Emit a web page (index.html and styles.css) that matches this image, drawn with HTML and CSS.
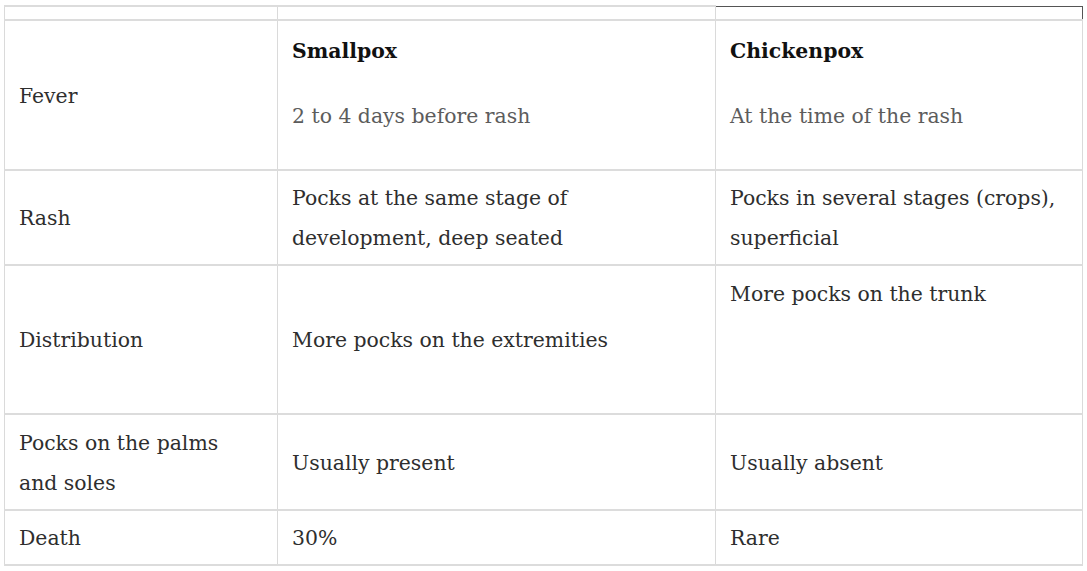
FILE: index.html
```html
<!DOCTYPE html>
<html lang="en">
<head>
<meta charset="utf-8">
<title>Smallpox vs Chickenpox</title>
<link rel="stylesheet" href="styles.css">
</head>
<body>
<div class="wrap">
  <table class="cmp">
    <colgroup>
      <col class="c1">
      <col class="c2">
      <col class="c3">
    </colgroup>
    <tr class="r-empty">
      <td></td>
      <td></td>
      <td class="outlined"></td>
    </tr>
    <tr class="r-fever">
      <td>Fever</td>
      <td>
        <p class="head">Smallpox</p>
        <p class="para muted">2 to 4 days before rash</p>
      </td>
      <td>
        <p class="head">Chickenpox</p>
        <p class="para muted">At the time of the rash</p>
      </td>
    </tr>
    <tr>
      <td>Rash</td>
      <td>Pocks at the same stage of development, deep seated</td>
      <td>Pocks in several stages (crops), superficial</td>
    </tr>
    <tr class="r-dist">
      <td>Distribution</td>
      <td>More pocks on the extremities</td>
      <td class="top"><p class="para">More pocks on the trunk</p></td>
    </tr>
    <tr class="r-palms">
      <td class="narrow">Pocks on the palms and soles</td>
      <td>Usually present</td>
      <td>Usually absent</td>
    </tr>
    <tr>
      <td>Death</td>
      <td>30%</td>
      <td>Rare</td>
    </tr>
  </table>
</div>
</body>
</html>
```

FILE: styles.css
```css
html, body {
  margin: 0;
  padding: 0;
  background: #ffffff;
}

.wrap {
  padding: 5px 0 0 4px;
}

.cmp {
  border-collapse: collapse;
  table-layout: fixed;
  width: 1078px;
  font-family: "DejaVu Serif", "Liberation Serif", serif;
  font-size: 20.4px;
  line-height: 40px;
  color: #2e2e2e;
}

.c1 { width: 273px; }
.c2 { width: 438px; }
.c3 { width: 367px; }

.cmp td {
  border-left: 1px solid #dadada;
  border-right: 1px solid #dadada;
  border-top: 2px solid #dcdcdc;
  border-bottom: 2px solid #dcdcdc;
  padding: 7px 14px 6px 14px;
  vertical-align: middle;
  text-align: left;
}

.cmp td.narrow {
  padding-right: 36px;
}

.r-empty td {
  height: 12px;
  padding: 0;
}

.cmp td.outlined {
  border-top: 1px solid #555555;
  border-right: 1px solid #555555;
}

.r-fever td {
  height: 134px;
  padding-top: 8px;
  padding-bottom: 6px;
}

.r-dist td {
  height: 133px;
}

.r-palms td {
  padding-top: 8px;
}

.cmp td.top {
  vertical-align: top;
  padding-top: 8px;
}

.head {
  margin: 0 0 25px 0;
  font-weight: bold;
  color: #111111;
}

.para {
  margin: 0 0 25px 0;
}

.muted {
  color: #5c5c5c;
}
```
